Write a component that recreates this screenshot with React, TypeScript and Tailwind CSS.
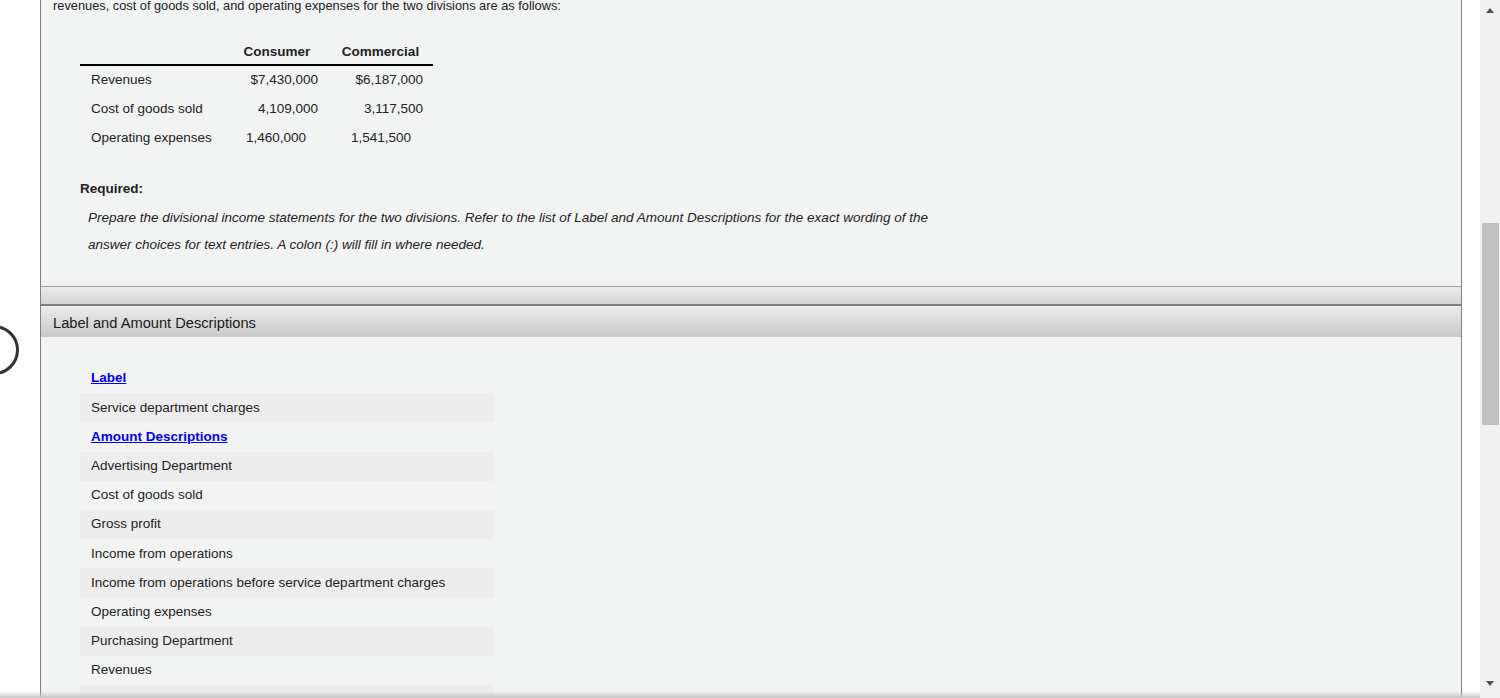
const rows = [
  { label: 'Revenues', consumer: '$7,430,000', commercial: '$6,187,000', pr: 'pr-[10px]' },
  { label: 'Cost of goods sold', consumer: '4,109,000', commercial: '3,117,500', pr: 'pr-[10px]' },
  { label: 'Operating expenses', consumer: '1,460,000', commercial: '1,541,500', pr: 'pr-[22px]' },
]

// list items — link rows are the section headings
const items: { text: string; link?: boolean }[] = [
  { text: 'Label', link: true },
  { text: 'Service department charges' },
  { text: 'Amount Descriptions', link: true },
  { text: 'Advertising Department' },
  { text: 'Cost of goods sold' },
  { text: 'Gross profit' },
  { text: 'Income from operations' },
  { text: 'Income from operations before service department charges' },
  { text: 'Operating expenses' },
  { text: 'Purchasing Department' },
  { text: 'Revenues' },
  { text: '' },
]

export default function App() {
  return (
    <div className="relative flex h-[698px] w-[1500px] overflow-hidden bg-white font-['Liberation_Sans',Arial,sans-serif] text-[13.5px] text-[#222]">
      <div className="w-[1480px] shrink-0 pl-[40px]">
        <div className="flex h-[760px] w-[1422px] flex-col border-x border-[#7f7f7f] bg-[#f2f3f3]">
          {/* Problem text */}
          <p className="-mt-[2px] pl-[12px] text-[12.8px] leading-[16px]">
            revenues, cost of goods sold, and operating expenses for the two divisions are as follows:
          </p>

          <div className="ml-[39px] mt-[26px] w-[353px]">
            <div className="grid h-[26px] grid-cols-[146px_102px_105px] items-center border-b-2 border-black font-bold">
              <span />
              <span className="text-center">Consumer</span>
              <span className="text-center">Commercial</span>
            </div>
            {rows.map((r) => (
              <div key={r.label} className="grid h-[29px] grid-cols-[146px_102px_105px] items-center">
                <span className="pl-[11px]">{r.label}</span>
                <span className={`text-right ${r.pr}`}>{r.consumer}</span>
                <span className={`text-right ${r.pr}`}>{r.commercial}</span>
              </div>
            ))}
          </div>

          <div className="ml-[39px] mt-[26px] font-bold leading-[20px]">Required:</div>
          <p className="ml-[47px] mt-[5px] w-[870px] italic leading-[27px]">
            Prepare the divisional income statements for the two divisions. Refer to the list of Label and Amount
            Descriptions for the exact wording of the answer choices for text entries. A colon (:) will fill in where
            needed.
          </p>

          {/* Section divider */}
          <div className="mt-[28px] h-[18px] border-t border-[#a3a3a3] bg-gradient-to-b from-[#ececec] to-[#d4d4d4]" />
          <div className="flex h-[33px] items-center border-t-2 border-[#808080] bg-gradient-to-b from-[#ededed] to-[#c9c9c9] pl-[12px] pt-[2px] text-[14.67px] text-[#1a1a1a]">
            Label and Amount Descriptions
          </div>

          <div className="ml-[39px] mt-[27px] w-[414px]">
            {items.map((it, i) => (
              <div
                key={i}
                className={`flex h-[29.2px] items-center pl-[11px] ${i % 2 === 1 ? 'bg-[#ededed]' : ''}`}
              >
                {it.link ? (
                  <a href="#" className="font-bold text-[#0000ee] underline">
                    {it.text}
                  </a>
                ) : (
                  <span>{it.text}</span>
                )}
              </div>
            ))}
          </div>
        </div>
      </div>

      {/* Scrollbar */}
      <div className="relative w-[20px] shrink-0 bg-[#f1f1f1]">
        <div className="absolute left-[6px] top-[8px] h-0 w-0 border-x-[4.5px] border-b-[5px] border-x-transparent border-b-[#505050]" />
        <div className="absolute left-[2px] top-[223px] h-[202px] w-[17px] bg-[#c1c1c1]" />
        <div className="absolute left-[6px] top-[681px] h-0 w-0 border-x-[4.5px] border-t-[5px] border-x-transparent border-t-[#505050]" />
      </div>

      {/* Partial circle at left edge */}
      <div className="absolute left-[-31px] top-[325px] h-[50px] w-[50px] rounded-full border-[3px] border-[#333]" />

      {/* Footer shadow */}
      <div className="absolute bottom-0 left-0 h-[7px] w-[1480px] bg-gradient-to-b from-transparent to-[#c6c6c6]" />
    </div>
  )
}
